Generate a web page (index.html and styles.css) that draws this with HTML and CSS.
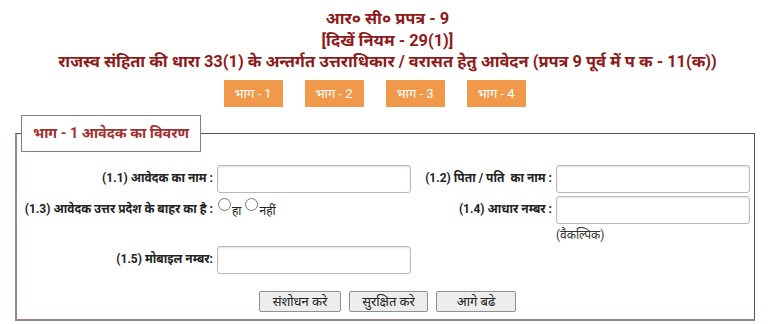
FILE: index.html
```html
<!DOCTYPE html>
<html lang="hi">
<head>
	<meta charset="UTF-8">
	<title>आर० सी० प्रपत्र - 9</title>
	<link rel="stylesheet" href="styles.css">
</head>
<body>
	<div class="head">
		<h3>आर० सी० प्रपत्र - 9</h3>
		<h3>[दिखें नियम - 29(1)]</h3>
		<h3>राजस्व संहिता की धारा 33(1) के अन्तर्गत उत्तराधिकार / वरासत हेतु आवेदन (प्रपत्र 9 पूर्व में प क - 11(क))</h3>
	</div>
	<div class="tabs">
		<a href="javascript:;">भाग - 1</a>
		<a href="javascript:;">भाग - 2</a>
		<a href="javascript:;">भाग - 3</a>
		<a href="javascript:;">भाग - 4</a>
	</div>
	<fieldset class="part">
		<legend>भाग - 1 आवेदक का विवरण</legend>
		<div class="grid">
			<label class="lbl">(1.1) आवेदक का नाम :</label>
			<input type="text">
			<label class="lbl">(1.2) पिता / पति &nbsp;का नाम :</label>
			<input type="text">

			<label class="lbl">(1.3) आवेदक उत्तर प्रदेश के बाहर का है :</label>
			<div class="radios">
				<input type="radio" name="bahar"><span>हा</span>
				<input type="radio" name="bahar"><span>नहीं</span>
			</div>
			<label class="lbl">(1.4) आधार नम्बर :</label>
			<div>
				<input type="text">
				<div class="note">(वैकल्पिक)</div>
			</div>

			<label class="lbl">(1.5) मोबाइल नम्बर:</label>
			<input type="text">
		</div>
		<div class="actions">
			<button class="w1">संशोधन करे</button>
			<button class="w2">सुरक्षित करे</button>
			<button class="w3">आगे बढे</button>
		</div>
	</fieldset>
</body>
</html>
```

FILE: styles.css
```css
body {
	margin: 0;
	font-family: "Roboto", "Noto Sans", "Liberation Sans", sans-serif;
	color: #222;
	background: #fff;
}
.head {
	text-align: center;
	padding-top: 8px;
}
.head h3 {
	margin: 0;
	font-size: 16.4px;
	line-height: 21.5px;
	font-weight: 700;
	color: #8e1b1b;
}
.tabs {
	display: flex;
	justify-content: center;
	gap: 22px;
	margin-top: 7px;
	padding-right: 26px;
}
.tabs a {
	display: block;
	width: 59px;
	height: 27px;
	line-height: 27px;
	text-align: center;
	background: #f0994a;
	color: #fff;
	font-size: 13px;
	text-decoration: none;
}
.part {
	margin: 8px 22px 0 15px;
	padding: 0 4px 7px;
	border: 1px solid #555;
	border-left-color: #a0838a;
	border-bottom-color: #a0838a;
	border-left-width: 2px;
	border-bottom-width: 2px;
}
.part legend {
	padding: 0 11px;
	height: 35px;
	line-height: 35px;
	border: 1px solid #8a7d80;
	color: #a3302e;
	font-size: 14.3px;
	font-weight: 700;
	background: #fff;
}
.grid {
	display: grid;
	grid-template-columns: 196px 194px 145px 194px;
	row-gap: 3px;
	align-items: start;
	margin-top: 13px;
}
.lbl {
	text-align: right;
	padding: 4px 4px 0 0;
	font-size: 12px;
	font-weight: 700;
	white-space: nowrap;
}
.grid input[type=text] {
	display: block;
	box-sizing: border-box;
	width: 194px;
	height: 28px;
	margin: 0;
	border: 1px solid #b9b9b9;
	border-radius: 3px;
	box-shadow: inset 0 1px 2px rgba(0, 0, 0, .12);
}
.radios {
	display: flex;
	align-items: flex-start;
	padding-top: 2px;
	font-size: 12px;
}
.radios input {
	width: 13px;
	height: 13px;
	margin: 0 1px 0 1px;
}
.radios span {
	padding-top: 4px;
	margin-right: 3px;
}
.note {
	font-size: 12px;
	margin-top: 2px;
	color: #333;
}
.actions {
	display: flex;
	justify-content: center;
	gap: 8px;
	margin-top: 17px;
	padding-left: 4px;
}
.actions button {
	height: 21px;
	padding: 0;
	font-family: inherit;
	font-size: 13px;
	color: #222;
	background: #ededed;
	border: 1px solid #8f8f8f;
	border-radius: 2px;
}
.w1 { width: 82px; }
.w2 { width: 79px; }
.w3 { width: 80px; }
```
